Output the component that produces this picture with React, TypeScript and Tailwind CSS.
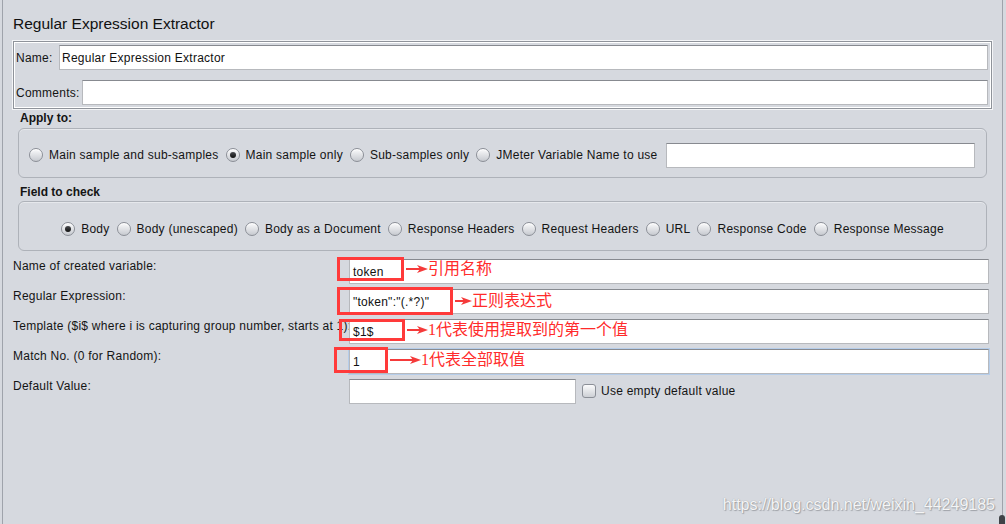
import React from "react";

const inputBase =
  "h-[25px] bg-white border border-[#b7b9bd] border-t-[#878a90] px-[2px] flex items-center text-[12px] leading-none text-[#111]";

function Radio({ checked }: { checked?: boolean }) {
  return (
    <span className="w-[14px] h-[14px] shrink-0 rounded-full border border-[#8b8f97] bg-gradient-to-b from-[#fbfbfc] to-[#c7cad0] flex items-center justify-center shadow-[inset_0_1px_0_#fff]">
      {checked && (
        <span className="w-[6px] h-[6px] rounded-full bg-gradient-to-b from-[#4a4c50] to-[#111]" />
      )}
    </span>
  );
}

function RadioItem({ label, checked }: { label: string; checked?: boolean }) {
  return (
    <span className="flex items-center gap-[6px] whitespace-nowrap">
      <Radio checked={checked} />
      <span>{label}</span>
    </span>
  );
}

function Arrow({ w }: { w: number }) {
  return (
    <svg width={w} height="10" viewBox={`0 0 ${w} 10`} className="block">
      <line x1="0" y1="5" x2={w - 8} y2="5" stroke="#f53a3a" strokeWidth="2" />
      <polygon points={`${w - 11},1 ${w},5 ${w - 11},9 ${w - 8},5`} fill="#f53a3a" />
    </svg>
  );
}

function Note({
  x,
  y,
  w,
  h,
  arrow,
  text,
}: {
  x: number;
  y: number;
  w: number;
  h: number;
  arrow: number;
  text: string;
}) {
  return (
    <div className="absolute flex items-center" style={{ left: x, top: y, height: h }}>
      <div className="border-[3px] border-[#ff3a3a] h-full" style={{ width: w }} />
      <div className="ml-[2px]">
        <Arrow w={arrow} />
      </div>
      <span className="text-[16px] leading-none tracking-[0] text-[#ff2b2b] font-['Liberation_Serif','Noto_Sans_CJK_SC',serif] whitespace-nowrap">
        {text}
      </span>
    </div>
  );
}

const rows = [
  { label: "Name of created variable:", value: "token" },
  { label: "Regular Expression:", value: '"token":"(.*?)"' },
  { label: "Template ($i$ where i is capturing group number, starts at 1):", value: "$1$" },
  { label: "Match No. (0 for Random):", value: "1", focus: true },
];

export default function App() {
  return (
    <div className="relative w-[1006px] h-[524px] overflow-hidden bg-[#d6d9df] font-['Liberation_Sans',Arial,sans-serif] text-[12px] tracking-[0.25px] text-[#141414]">
      <div className="ml-[2px] w-[1001px] h-full border-l border-r border-[#9fa3ab]">
        <div className="pl-[10px] pt-[15px] text-[15.5px] leading-[18px] tracking-[0] text-[#111]">
          Regular Expression Extractor
        </div>

        <div className="ml-[10px] mt-[8px] w-[979px] border border-[#8f939a] shadow-[inset_0_0_0_1px_#fff,0_0_0_1px_#f4f5f7] pt-[3px] pb-[3px] pl-[2px] pr-[3px]">
          <div className="flex items-center">
            <span className="w-[43px] shrink-0">Name:</span>
            <div className={`${inputBase} flex-1`}>Regular Expression Extractor</div>
          </div>
          <div className="flex items-center mt-[10px]">
            <span className="w-[66px] shrink-0">Comments:</span>
            <div className={`${inputBase} flex-1`} />
          </div>
        </div>

        <div className="ml-[17px] mt-[2px] leading-[14px] font-bold tracking-[0]">Apply to:</div>
        <div className="ml-[15px] mt-[3px] w-[969px] h-[50px] rounded-[6px] border border-[#aeb2b9] shadow-[inset_0_1px_0_#e6e8ec] flex items-center pt-[4px] pl-[10px] pr-[11px] gap-[7px]">
          <RadioItem label="Main sample and sub-samples" />
          <RadioItem label="Main sample only" checked />
          <RadioItem label="Sub-samples only" />
          <RadioItem label="JMeter Variable Name to use" />
          <div className={`${inputBase} flex-1 ml-[1px]`} />
        </div>

        <div className="ml-[17px] mt-[7px] leading-[14px] font-bold tracking-[0]">Field to check</div>
        <div className="ml-[15px] mt-[2px] w-[969px] h-[50px] rounded-[6px] border border-[#aeb2b9] shadow-[inset_0_1px_0_#e6e8ec] flex items-center justify-center pt-[5px] gap-[7px]">
          <RadioItem label="Body" checked />
          <RadioItem label="Body (unescaped)" />
          <RadioItem label="Body as a Document" />
          <RadioItem label="Response Headers" />
          <RadioItem label="Request Headers" />
          <RadioItem label="URL" />
          <RadioItem label="Response Code" />
          <RadioItem label="Response Message" />
        </div>

        <div className="ml-[10px] mt-[8px] w-[976px] flex flex-col gap-[5px]">
          {rows.map((r) => (
            <div key={r.label} className="flex items-start">
              <span className="w-[336px] shrink-0 whitespace-nowrap leading-[14px]">
                {r.label}
              </span>
              <div
                className={`${inputBase} flex-1 relative pl-[3px] ${
                  r.focus
                    ? "border-[#7da6d8] border-t-[#7da6d8] shadow-[0_0_0_1px_#b5cdea]"
                    : ""
                }`}
              >
                {r.value}
              </div>
            </div>
          ))}
          <div className="flex items-start">
            <span className="w-[336px] shrink-0 leading-[14px]">Default Value:</span>
            <div className={`${inputBase} w-[227px]`} />
            <span className="ml-[6px] mt-[5px] w-[14px] h-[14px] rounded-[3px] border border-[#8b8f97] bg-gradient-to-b from-[#fbfbfc] to-[#cdd0d5]" />
            <span className="ml-[5px] mt-[5px] leading-[14px]">Use empty default value</span>
          </div>
        </div>
      </div>

      <Note x={337} y={257} w={67} h={24} arrow={22} text="引用名称" />
      <Note x={337} y={287} w={116} h={28} arrow={17} text="正则表达式" />
      <Note x={339} y={319} w={66} h={22} arrow={21} text="1代表使用提取到的第一个值" />
      <Note x={334} y={347} w={54} h={26} arrow={31} text="1代表全部取值" />

      <div className="absolute right-[11px] top-[496px] text-[16px] leading-[18px] tracking-[0] text-white/90 [text-shadow:0_0_1px_#8e9196,1px_1px_1px_#a0a3a9] whitespace-nowrap">
        https://blog.csdn.net/weixin_44249185
      </div>
      <div className="absolute left-[999px] top-[515px] w-[6px] h-[12px] rounded-[3px] bg-[#3f4247]" />
    </div>
  );
}
